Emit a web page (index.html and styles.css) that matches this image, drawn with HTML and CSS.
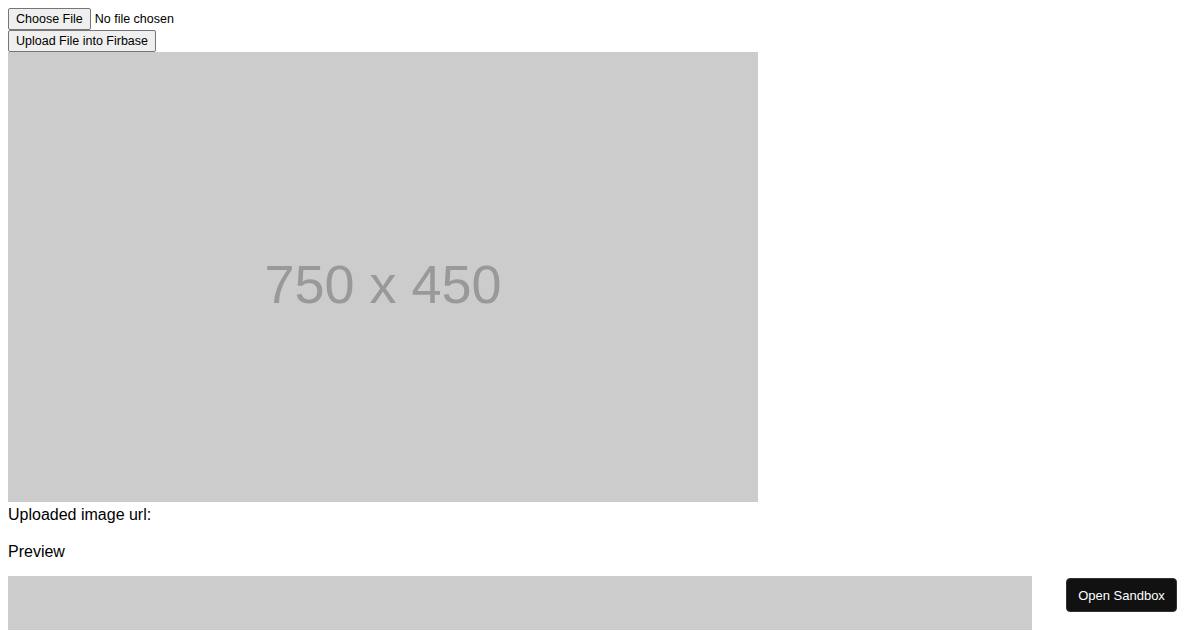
FILE: index.html
```html
<!DOCTYPE html>
<html>
<head>
<meta charset="utf-8">
<link rel="stylesheet" href="styles.css">
</head>
<body>
<input type="file" class="file"><br>
<button class="upload">Upload File into Firbase</button><br>
<div class="placeholder"><span>750 x 450</span></div>
<div class="url">Uploaded image url:</div>
<p class="preview">Preview</p>
<div class="preview-box"></div>
<button class="sandbox">Open Sandbox</button>
</body>
</html>
```
FILE: styles.css
```css
html, body {
  margin: 0;
  padding: 0;
}
body {
  margin: 8px;
  font-family: "Liberation Sans", Arial, sans-serif;
  font-size: 16px;
  color: #000;
  overflow: hidden;
}
.file {
  font-family: "Liberation Sans", Arial, sans-serif;
  font-size: 12.5px;
  height: 22px;
  vertical-align: top;
  color: #000;
}
.file::file-selector-button,
.upload {
  font-family: "Liberation Sans", Arial, sans-serif;
  font-size: 12.5px;
  height: 22px;
  padding: 0 7px;
  border: 1px solid #767676;
  border-radius: 2px;
  background: #efefef;
  color: #000;
  box-sizing: border-box;
}
.file::file-selector-button {
  margin-right: 4px;
}
.upload {
  vertical-align: top;
}
.placeholder {
  width: 750px;
  height: 450px;
  background: #cccccc;
  color: #999999;
  display: flex;
  align-items: center;
  justify-content: center;
  font-size: 54px;
  padding-top: 14px;
  box-sizing: border-box;
  margin-bottom: 4px;
}
.url {
  line-height: 18px;
}
.preview {
  margin: 19px 0 0;
  line-height: 18px;
}
.preview-box {
  width: 1024px;
  height: 300px;
  background: #cccccc;
  margin-top: 15px;
}
.sandbox {
  position: fixed;
  right: 23px;
  bottom: 18px;
  width: 111px;
  height: 34px;
  background: #111111;
  color: #ffffff;
  border: 1px solid #333;
  border-radius: 4px;
  font-family: "Liberation Sans", Arial, sans-serif;
  font-size: 13px;
  padding: 0;
}
```
